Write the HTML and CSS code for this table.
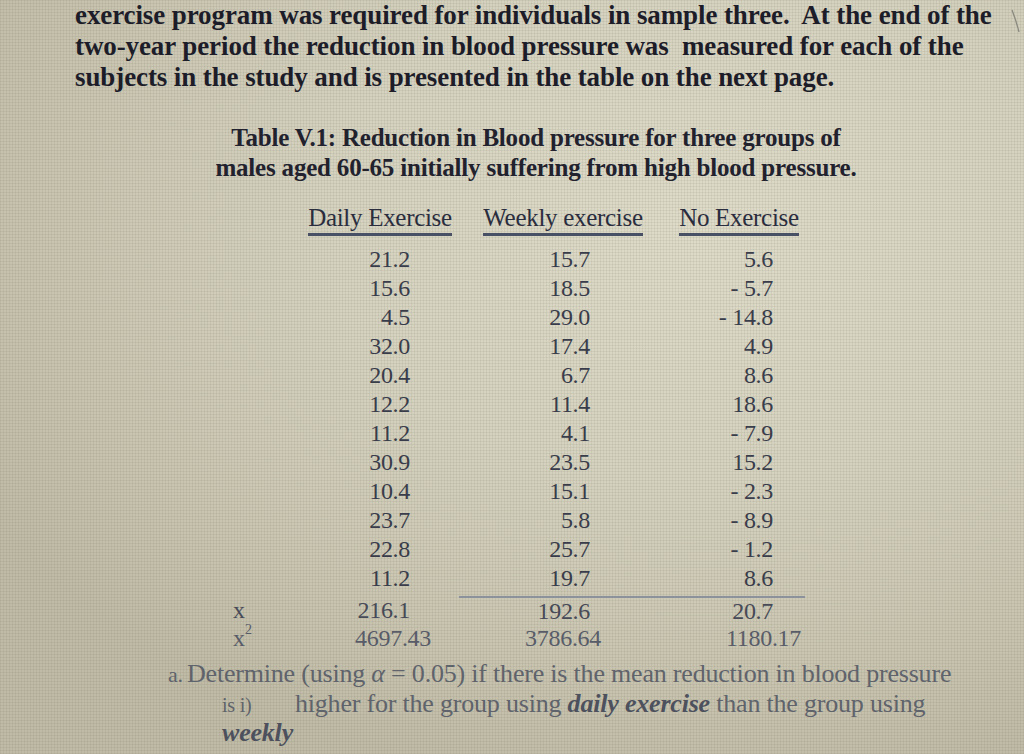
FILE: index.html
```html
<!DOCTYPE html>
<html lang="en">
<head>
<meta charset="utf-8">
<title>Table V.1 – Reduction in Blood pressure</title>
<link rel="stylesheet" href="styles.css">
</head>
<body>
<main class="page">
  <p class="intro">exercise program was required for individuals in sample three.&nbsp; At the end of the<br>two-year period the reduction in blood pressure was&nbsp; measured for each of the<br>subjects in the study and is presented in the table on the next page.</p>

  <p class="caption">Table V.1: Reduction in Blood pressure for three groups of<br>males aged 60-65 initially suffering from high blood pressure.</p>

  <div class="table">
    <span class="lbl"></span>
    <span class="head"><span class="ul">Daily Exercise</span></span>
    <span class="head"><span class="ul">Weekly exercise</span></span>
    <span class="head head-last"><span class="ul">No Exercise</span></span>

    <span class="lbl"></span><span class="c1">21.2</span><span class="c2">15.7</span><span class="c3">5.6</span>
    <span class="lbl"></span><span class="c1">15.6</span><span class="c2">18.5</span><span class="c3">- 5.7</span>
    <span class="lbl"></span><span class="c1">4.5</span><span class="c2">29.0</span><span class="c3">- 14.8</span>
    <span class="lbl"></span><span class="c1">32.0</span><span class="c2">17.4</span><span class="c3">4.9</span>
    <span class="lbl"></span><span class="c1">20.4</span><span class="c2">6.7</span><span class="c3">8.6</span>
    <span class="lbl"></span><span class="c1">12.2</span><span class="c2">11.4</span><span class="c3">18.6</span>
    <span class="lbl"></span><span class="c1">11.2</span><span class="c2">4.1</span><span class="c3">- 7.9</span>
    <span class="lbl"></span><span class="c1">30.9</span><span class="c2">23.5</span><span class="c3">15.2</span>
    <span class="lbl"></span><span class="c1">10.4</span><span class="c2">15.1</span><span class="c3">- 2.3</span>
    <span class="lbl"></span><span class="c1">23.7</span><span class="c2">5.8</span><span class="c3">- 8.9</span>
    <span class="lbl"></span><span class="c1">22.8</span><span class="c2">25.7</span><span class="c3">- 1.2</span>
    <span class="lbl"></span><span class="c1">11.2</span><span class="c2">19.7</span><span class="c3">8.6</span>

    <span class="lbl sum">x</span><span class="c1 sum">216.1</span><span class="c2 sum rule">192.6</span><span class="c3 sum rule">20.7</span>
    <span class="lbl sq">x<sup>2</sup></span><span class="c1 sq wide">4697.43</span><span class="c2 sq wide">3786.64</span><span class="c3 sq wide">1180.17</span>
  </div>

  <div class="question">
    <p class="q-line"><span class="letter">a.</span>Determine (using <span class="alpha">α</span> = 0.05) if there is the mean reduction in blood pressure</p>
    <p class="q-line sub"><span class="num">is i)</span>higher for the group using <em>daily exercise</em> than the group using</p>
    <p class="q-line sub last"><em>weekly</em></p>
  </div>

  <svg class="mark" width="12" height="30" viewBox="0 0 12 30" aria-hidden="true">
    <path d="M2 4 Q6 14 9 26" fill="none" stroke="#8a8a80" stroke-width="1.3"/>
  </svg>
</main>
</body>
</html>
```

FILE: styles.css
```css
html, body {
  margin: 0;
  padding: 0;
}

body {
  width: 1024px;
  height: 754px;
  overflow: hidden;
  background:
    repeating-linear-gradient(0deg, rgba(70, 66, 50, 0.07) 0 1px, transparent 1px 3px),
    repeating-linear-gradient(90deg, rgba(70, 66, 50, 0.07) 0 1px, transparent 1px 3px),
    radial-gradient(ellipse 80% 75% at 68% 30%, #dedbc9 0%, #d5d2bf 45%, #c8c4b0 80%, #bfbba6 100%);
  font-family: "Liberation Serif", "Times New Roman", serif;
}

.page {
  position: relative;
  height: 754px;
}

.intro {
  margin: 0;
  padding-left: 75px;
  font-size: 27px;
  line-height: 31px;
  font-weight: bold;
  letter-spacing: -0.1px;
  color: #1d1d29;
  white-space: nowrap;
}

.caption {
  margin: 30px 0 0;
  text-align: center;
  width: 1072px;
  font-size: 25px;
  line-height: 30px;
  font-weight: bold;
  letter-spacing: -0.2px;
  color: #22222e;
  white-space: nowrap;
}

.table {
  display: grid;
  grid-template-columns: 70px 170px 196px 144px;
  grid-template-rows: 42px repeat(12, 29px) 32px 28px;
  margin: 20px 0 0 225px;
  font-size: 24px;
  line-height: 29px;
  color: #393c4a;
}

.head {
  text-align: center;
  color: #2a2d3e;
  font-size: 25px;
  letter-spacing: -0.3px;
}

.head-last {
  padding-left: 12px;
}

.ul {
  display: inline-block;
  border-bottom: 3px solid #485066;
  padding-bottom: 1px;
}

.c1, .c2, .c3 {
  text-align: right;
  white-space: nowrap;
  letter-spacing: -0.3px;
}

.c1 { padding-right: 55px; }
.c2 { padding-right: 71px; }
.c3 { padding-right: 32px; }

.lbl {
  padding-left: 8px;
  color: #4a4d5a;
}

.sum {
  margin-top: 3px;
  color: #474a57;
  line-height: 28px;
}

.rule {
  border-top: 2px solid #8c929b;
  line-height: 26px;
}

.c2.rule {
  margin-left: -6px;
}

.sq {
  color: #585c68;
  line-height: 26px;
}

.sq sup {
  font-size: 14px;
  line-height: 0;
  vertical-align: 12px;
}

.c1.wide { padding-right: 34px; }
.c2.wide { padding-right: 60px; }
.c3.wide { padding-right: 4px; }

.question {
  margin-top: 6px;
  color: #5f636b;
  font-size: 26px;
  line-height: 29px;
  letter-spacing: -0.2px;
}

.q-line {
  margin: 0;
  padding-left: 168px;
  white-space: nowrap;
}

.q-line.sub {
  padding-left: 222px;
}

.q-line.last {
  line-height: 26px;
}

.letter {
  display: inline-block;
  width: 19px;
  font-size: 22px;
}

.num {
  display: inline-block;
  width: 73px;
  font-size: 20px;
}

.alpha {
  font-style: italic;
}

.question em {
  font-style: italic;
  font-weight: bold;
  color: #4d515d;
}

.mark {
  position: absolute;
  left: 1010px;
  top: 6px;
}
```
